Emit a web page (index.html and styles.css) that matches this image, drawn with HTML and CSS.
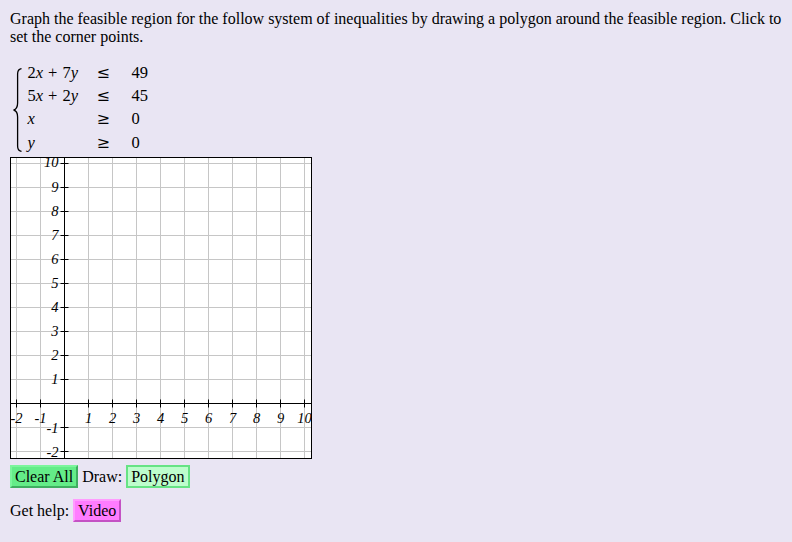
FILE: index.html
```html
<!DOCTYPE html>
<html>
<head>
<meta charset="utf-8">
<link rel="stylesheet" href="styles.css">
</head>
<body>
<div class="page">
  <p class="prompt">Graph the feasible region for the follow system of inequalities by drawing a polygon around the feasible region. Click to set the corner points.</p>
  <div class="system">
    <svg class="brace" width="9" height="84" viewBox="0 0 9 84">
      <path d="M8.5,0.6 C5.5,1 4.6,2.6 4.6,6 L4.6,35 C4.6,39 3,41.4 0.6,42 C3,42.6 4.6,45 4.6,49 L4.6,78 C4.6,81.4 5.5,83 8.5,83.4" fill="none" stroke="#000" stroke-width="1.3"/>
    </svg>
    <div class="rows">
      <span class="lhs">2<i class="v">x</i><span class="op">+</span>7<i class="v">y</i></span><span class="rel">≤</span><span class="rhs">49</span>
      <span class="lhs">5<i class="v">x</i><span class="op">+</span>2<i class="v">y</i></span><span class="rel">≤</span><span class="rhs">45</span>
      <span class="lhs"><i class="v">x</i></span><span class="rel">≥</span><span class="rhs">0</span>
      <span class="lhs"><i class="v">y</i></span><span class="rel">≥</span><span class="rhs">0</span>
    </div>
  </div>
  <div class="graph">
    <svg width="300" height="300" viewBox="0 0 300 300">
      <g class="grid" stroke="#c6c6c6" stroke-width="1">
        <line x1="5.5" y1="0" x2="5.5" y2="300"/>
        <line x1="29.5" y1="0" x2="29.5" y2="300"/>
        <line x1="77.5" y1="0" x2="77.5" y2="300"/>
        <line x1="101.5" y1="0" x2="101.5" y2="300"/>
        <line x1="125.5" y1="0" x2="125.5" y2="300"/>
        <line x1="149.5" y1="0" x2="149.5" y2="300"/>
        <line x1="173.5" y1="0" x2="173.5" y2="300"/>
        <line x1="197.5" y1="0" x2="197.5" y2="300"/>
        <line x1="221.5" y1="0" x2="221.5" y2="300"/>
        <line x1="245.5" y1="0" x2="245.5" y2="300"/>
        <line x1="269.5" y1="0" x2="269.5" y2="300"/>
        <line x1="293.5" y1="0" x2="293.5" y2="300"/>
        <line x1="0" y1="5.5" x2="300" y2="5.5"/>
        <line x1="0" y1="29.5" x2="300" y2="29.5"/>
        <line x1="0" y1="53.5" x2="300" y2="53.5"/>
        <line x1="0" y1="77.5" x2="300" y2="77.5"/>
        <line x1="0" y1="101.5" x2="300" y2="101.5"/>
        <line x1="0" y1="125.5" x2="300" y2="125.5"/>
        <line x1="0" y1="149.5" x2="300" y2="149.5"/>
        <line x1="0" y1="173.5" x2="300" y2="173.5"/>
        <line x1="0" y1="197.5" x2="300" y2="197.5"/>
        <line x1="0" y1="221.5" x2="300" y2="221.5"/>
        <line x1="0" y1="269.5" x2="300" y2="269.5"/>
        <line x1="0" y1="293.5" x2="300" y2="293.5"/>
      </g>
      <g stroke="#000" stroke-width="1">
        <line x1="53.5" y1="0" x2="53.5" y2="300"/>
        <line x1="0" y1="245.5" x2="300" y2="245.5"/>
        <path d="M5.5,241.5V249.5M29.5,241.5V249.5M77.5,241.5V249.5M101.5,241.5V249.5M125.5,241.5V249.5M149.5,241.5V249.5M173.5,241.5V249.5M197.5,241.5V249.5M221.5,241.5V249.5M245.5,241.5V249.5M269.5,241.5V249.5M293.5,241.5V249.5"/>
        <path d="M49.5,5.5H57.5M49.5,29.5H57.5M49.5,53.5H57.5M49.5,77.5H57.5M49.5,101.5H57.5M49.5,125.5H57.5M49.5,149.5H57.5M49.5,173.5H57.5M49.5,197.5H57.5M49.5,221.5H57.5M49.5,269.5H57.5M49.5,293.5H57.5"/>
      </g>
      <g class="lbl" text-anchor="middle">
        <text x="5.5" y="264.5">-2</text>
        <text x="29.5" y="264.5">-1</text>
        <text x="77.5" y="264.5">1</text>
        <text x="101.5" y="264.5">2</text>
        <text x="125.5" y="264.5">3</text>
        <text x="149.5" y="264.5">4</text>
        <text x="173.5" y="264.5">5</text>
        <text x="197.5" y="264.5">6</text>
        <text x="221.5" y="264.5">7</text>
        <text x="245.5" y="264.5">8</text>
        <text x="269.5" y="264.5">9</text>
        <text x="293.5" y="264.5">10</text>
      </g>
      <g class="lbl" text-anchor="end">
        <text x="47.5" y="9">10</text>
        <text x="47.5" y="33.5">9</text>
        <text x="47.5" y="57.5">8</text>
        <text x="47.5" y="81.5">7</text>
        <text x="47.5" y="105.5">6</text>
        <text x="47.5" y="129.5">5</text>
        <text x="47.5" y="153.5">4</text>
        <text x="47.5" y="177.5">3</text>
        <text x="47.5" y="201.5">2</text>
        <text x="47.5" y="225.5">1</text>
        <text x="47.5" y="275">-1</text>
        <text x="47.5" y="298.5">-2</text>
      </g>
    </svg>
  </div>
  <div class="controls">
    <button class="btn btn-clear">Clear All</button>
    <span class="label">Draw:</span>
    <button class="btn btn-poly">Polygon</button>
  </div>
  <div class="controls help">
    <span class="label">Get help:</span>
    <button class="btn btn-video">Video</button>
  </div>
</div>
</body>
</html>
```

FILE: styles.css
```css
html, body {
  margin: 0;
  padding: 0;
  background: #e9e5f3;
}
body {
  font-family: "Liberation Serif", "Times New Roman", serif;
  font-size: 16px;
  color: #000;
}
.page {
  padding: 9.5px 10px 0 10px;
}
.prompt {
  margin: 0;
  font-size: 16px;
  line-height: normal;
}
.system {
  display: flex;
  align-items: flex-start;
  margin-top: 15px;
}
.brace {
  display: block;
  margin-left: 2.5px;
  margin-top: 7px;
  margin-right: 6px;
}
.rows {
  display: grid;
  grid-template-columns: 68px 36px auto;
  font-family: "Liberation Serif", "Times New Roman", serif;
  font-size: 16.5px;
  line-height: 23.4px;
}
.lhs, .rhs {
  font-family: "Liberation Serif", "Times New Roman", serif;
}
.v {
  font-family: "Liberation Serif", "Times New Roman", serif;
  font-style: italic;
}
.op {
  font-family: "Liberation Serif", "Times New Roman", serif;
  margin: 0 5px;
}
.rel {
  font-family: "DejaVu Serif", serif;
  font-size: 16px;
  padding-left: 1px;
}
.graph {
  margin-top: 3px;
  width: 300px;
  height: 300px;
  border: 1px solid #000;
  background: #fff;
}
.graph svg {
  display: block;
  overflow: hidden;
}
.lbl {
  font-family: "Liberation Serif", "Times New Roman", serif;
  font-style: italic;
  font-size: 14.5px;
  fill: #000;
}
.controls {
  display: flex;
  align-items: center;
  gap: 4px;
  margin-top: 6px;
}
.help {
  margin-top: 11px;
}
.label {
  font-size: 16px;
}
.btn {
  font-family: "Liberation Serif", "Times New Roman", serif;
  font-size: 16px;
  line-height: 17px;
  padding: 1px 3px;
  margin: 0;
  border: 2px solid;
  color: #000;
}
.btn-clear {
  background: #64ec88;
  border-color: #7cf59c #3fae60 #3fae60 #7cf59c;
}
.btn-poly {
  background: #bdfdcc;
  border-color: #66e384;
}
.btn-video {
  background: #ff7cff;
  border-color: #ff9cff #c452c4 #c452c4 #ff9cff;
}
```
